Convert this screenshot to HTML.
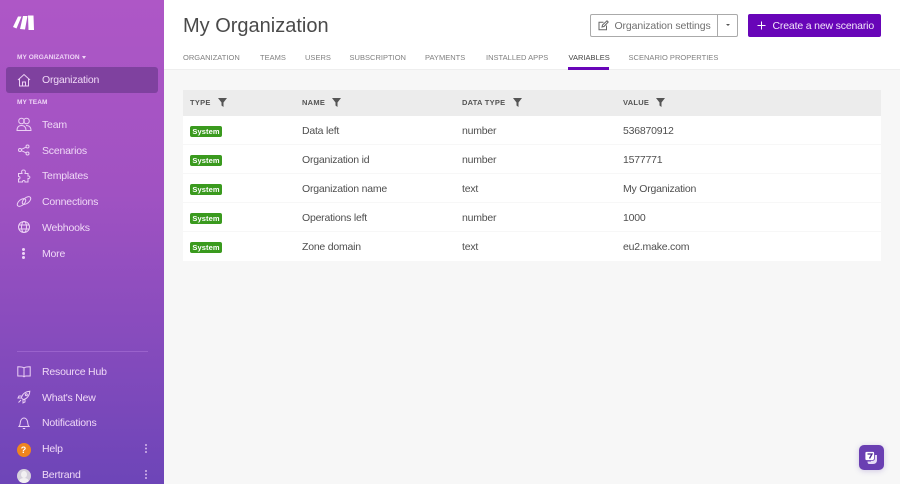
<!DOCTYPE html>
<html><head><meta charset="utf-8"><style>
html,body{margin:0;padding:0}
body{width:900px;height:484px;overflow:hidden;position:relative;background:#f7f7f7;font-family:"Liberation Sans",sans-serif;color:#444}
div,span{position:absolute;white-space:nowrap}
svg{position:absolute;fill:none;stroke:#ecd0f5;stroke-width:1}
#side{left:0;top:0;width:164px;height:484px;background:linear-gradient(180deg,#ae57c6 0%,#a052c2 40%,#6d45b8 100%)}
.n{left:42px;font-size:10.5px;letter-spacing:-.2px;color:#f0d9f7;line-height:14px}
.h{left:17px;font-size:6.5px;font-weight:bold;letter-spacing:.1px;color:#efd5f7;line-height:10px}
.tab{top:52px;font-size:7.5px;letter-spacing:.02px;color:#808080;line-height:11px}
.th{top:97px;font-size:7.5px;font-weight:bold;letter-spacing:.25px;color:#555;line-height:11px}
.f{top:98px;stroke:none;fill:#555}
.r{left:183px;width:698px;background:#fff;height:28px}
.b{left:190px;width:32px;height:11px;border-radius:2px;background:#3a9a1e;color:#fff;font-size:7.5px;font-weight:bold;line-height:11px;text-align:center;letter-spacing:.1px}
.t{font-size:10.5px;letter-spacing:-.22px;color:#4f4f4f;line-height:14px}
</style></head><body>
<div style="left:164px;top:0;width:736px;height:70px;background:#fff;border-bottom:1px solid #eee;box-sizing:border-box"></div>

<div id="side"></div>
<svg style="left:12px;top:14px;stroke:none;fill:#fff" width="24" height="18" viewBox="0 0 24 18"><path d="M1 13 6 2.500 9.500 2.500 4.500 14.500Z M8 15 11 2 15.500 2 13 15.500Z M16 1.500H21.500L22 16H16.500Z"/></svg>
<div class="h" style="top:53px">MY ORGANIZATION</div>
<div style="left:82px;top:56px;width:0;height:0;border-left:2.5px solid transparent;border-right:2.5px solid transparent;border-top:3px solid #efd5f7"></div>
<div style="left:6px;top:67px;width:152px;height:26px;border-radius:3px;background:#7f419f"></div>
<svg style="left:17px;top:73px" width="14" height="14" viewBox="0 0 14 14"><path d="M1 7 7 1.500 13 7M2.500 6V13H11.500V6M5.500 13V9H8.500V13"/></svg>
<div class="n" style="top:73px">Organization</div>
<div class="h" style="top:98px">MY TEAM</div>

<svg style="left:16px;top:117px" width="16" height="15" viewBox="0 0 16 15"><circle cx="5.500" cy="4" r="2.800"/><circle cx="10.500" cy="4" r="2.800"/><path d="M1 13.500C1 9.500 3 8.500 5.500 8.500S10 9.500 10 13.500ZM10 8.500C13 8.500 15 10 15 13.500H10.500"/></svg>
<div class="n" style="top:118px">Team</div>
<svg style="left:18px;top:144px" width="12" height="12" viewBox="0 0 12 12"><circle cx="2" cy="6" r="1.500"/><circle cx="9.500" cy="2.500" r="1.500"/><circle cx="9.500" cy="9.500" r="1.500"/><path d="M3.500 5.300 8 3.200M3.500 6.700 8 8.800"/></svg>
<div class="n" style="top:144px">Scenarios</div>
<svg style="left:17px;top:169px" width="14" height="14" viewBox="0 0 14 14"><path d="M1.500 4.500H5C4 2 5 1 6.500 1S9 2 8 4.500H11V7C13.500 6.500 13.500 10 11 9.500V13H8C8.500 11 5 11 5.500 13H1.500V10C3.500 10.500 3.500 7 1.500 7.500Z"/></svg>
<div class="n" style="top:169px">Templates</div>
<svg style="left:16px;top:195px" width="16" height="13" viewBox="0 0 16 13"><ellipse cx="5.500" cy="7.500" rx="5" ry="2.800" transform="rotate(-40 5.500 7.500)"/><ellipse cx="10.500" cy="5.500" rx="5" ry="2.800" transform="rotate(-40 10.500 5.500)"/></svg>
<div class="n" style="top:195px">Connections</div>
<svg style="left:17px;top:220px" width="14" height="14" viewBox="0 0 14 14"><circle cx="7" cy="7" r="5.500"/><ellipse cx="7" cy="7" rx="2.500" ry="5.500"/><path d="M1.500 5H12.500M1.500 9H12.500"/></svg>
<div class="n" style="top:221px">Webhooks</div>
<div style="left:22px;top:248px;width:3px;height:3px;border-radius:50%;background:#eed6f6"></div>
<div style="left:22px;top:252px;width:3px;height:3px;border-radius:50%;background:#eed6f6"></div>
<div style="left:22px;top:256px;width:3px;height:3px;border-radius:50%;background:#eed6f6"></div>
<div class="n" style="top:247px">More</div>

<div style="left:17px;top:351px;width:131px;height:1px;background:#9a62cc"></div>
<svg style="left:17px;top:365px" width="14" height="13" viewBox="0 0 14 13"><path d="M7 3C6 2 4 1.800 .8 1.800V11H5C6 11 6.500 11.200 7 11.800 7.500 11.200 8 11 9 11H13.200V1.800C10 1.800 8 2 7 3ZM7 3V11.800"/></svg>
<div class="n" style="top:365px">Resource Hub</div>
<svg style="left:17px;top:390px" width="14" height="14" viewBox="0 0 14 14"><path d="M4.500 8C5 4 8.500 1.500 12.800 1.200 12.500 5.500 10 9 6 9.500ZM4.500 6H2L1 8H4M8 9.500V12L6 13V10M4 10 1.500 12.500"/><circle cx="9.300" cy="4.700" r="1"/></svg>
<div class="n" style="top:391px">What's New</div>
<svg style="left:18px;top:416px" width="12" height="14" viewBox="0 0 12 14"><path d="M1 10.500C2.500 9 2 7.500 2.500 5.500 3 3.500 4.500 2 6 2S9 3.500 9.500 5.500C10 7.500 9.500 9 11 10.500ZM4.800 12.500H7.200"/></svg>
<div class="n" style="top:416px">Notifications</div>
<div style="left:16.500px;top:443px;width:14px;height:14px;border-radius:50%;background:#f0851e;color:#fff;font-size:9px;font-weight:bold;line-height:14px;text-align:center">?</div>
<div class="n" style="top:442px">Help</div>
<div style="left:144.500px;top:444px;width:2px;height:2px;background:#d5b7ea;box-shadow:0 3.500px #d5b7ea,0 7px #d5b7ea;border-radius:50%"></div>
<div style="left:16.500px;top:469px;width:14px;height:14px;border-radius:50%;background:#d6d1dc;overflow:hidden"><div style="left:4px;top:2px;width:6px;height:7px;border-radius:50%;background:#f2f0f2"></div><div style="left:2px;top:9px;width:10px;height:7px;border-radius:50%;background:#f2f0f2"></div></div>
<div class="n" style="top:468px">Bertrand</div>
<div style="left:144.500px;top:470px;width:2px;height:2px;background:#d5b7ea;box-shadow:0 3.500px #d5b7ea,0 7px #d5b7ea;border-radius:50%"></div>

<div style="left:183px;top:13px;font-size:20px;color:#4a4a4a;line-height:27px">My Organization</div>

<div style="left:590px;top:14px;width:148px;height:23px;border:1px solid #aaa;border-radius:2px;background:#fff;box-sizing:border-box"></div>
<div style="left:717px;top:14px;width:1px;height:23px;background:#aaa"></div>
<svg style="left:598px;top:20px;stroke:#666" width="11" height="11" viewBox="0 0 11 11"><path d="M8.500 5.500V9.800H1V2.300H5.500M4 7 4.500 5 9 .8 10.200 2 6 6.500Z"/></svg>
<div style="left:614.500px;top:19px;font-size:10.5px;letter-spacing:-.12px;color:#707070;line-height:14px">Organization settings</div>
<div style="left:726px;top:24px;width:0;height:0;border-left:2px solid transparent;border-right:2px solid transparent;border-top:2.500px solid #555"></div>
<div style="left:748px;top:14px;width:133px;height:23px;border-radius:2px;background:#6805b8"></div>
<svg style="left:757px;top:21px;stroke:#fff" width="9" height="9" viewBox="0 0 9 9"><path d="M4.500 .5V8.500M.5 4.500H8.500"/></svg>
<div style="left:772.500px;top:19px;font-size:10.5px;letter-spacing:-.17px;color:#f3e6fb;line-height:14px">Create a new scenario</div>

<div class="tab" style="left:183px">ORGANIZATION</div>
<div class="tab" style="left:260px">TEAMS</div>
<div class="tab" style="left:305px">USERS</div>
<div class="tab" style="left:349.500px">SUBSCRIPTION</div>
<div class="tab" style="left:425px">PAYMENTS</div>
<div class="tab" style="left:486px">INSTALLED APPS</div>
<div class="tab" style="left:568.500px;color:#444">VARIABLES</div>
<div style="left:568px;top:67px;width:41px;height:3px;background:#6805b8"></div>
<div class="tab" style="left:628.500px">SCENARIO PROPERTIES</div>

<div style="left:183px;top:90px;width:698px;height:26px;background:#ececec"></div>
<div class="th" style="left:190px">TYPE</div><svg class="f" style="left:218px" width="9" height="9" viewBox="0 0 9 9"><path d="M0 0H9L5.500 4.500V9L3.500 7.500V4.500Z"/></svg>
<div class="th" style="left:302px">NAME</div><svg class="f" style="left:332px" width="9" height="9" viewBox="0 0 9 9"><path d="M0 0H9L5.500 4.500V9L3.500 7.500V4.500Z"/></svg>
<div class="th" style="left:462px">DATA TYPE</div><svg class="f" style="left:512.500px" width="9" height="9" viewBox="0 0 9 9"><path d="M0 0H9L5.500 4.500V9L3.500 7.500V4.500Z"/></svg>
<div class="th" style="left:623px">VALUE</div><svg class="f" style="left:655.500px" width="9" height="9" viewBox="0 0 9 9"><path d="M0 0H9L5.500 4.500V9L3.500 7.500V4.500Z"/></svg>

<div class="r" style="top:116px"></div>
<div class="r" style="top:145px"></div>
<div class="r" style="top:174px"></div>
<div class="r" style="top:203px"></div>
<div class="r" style="top:232px;height:29px"></div>

<div class="b" style="top:126px">System</div><div class="t" style="left:302px;top:124px">Data left</div><div class="t" style="left:462px;top:124px">number</div><div class="t" style="left:623px;top:124px">536870912</div>
<div class="b" style="top:155px">System</div><div class="t" style="left:302px;top:153px">Organization id</div><div class="t" style="left:462px;top:153px">number</div><div class="t" style="left:623px;top:153px">1577771</div>
<div class="b" style="top:184px">System</div><div class="t" style="left:302px;top:182px">Organization name</div><div class="t" style="left:462px;top:182px">text</div><div class="t" style="left:623px;top:182px">My Organization</div>
<div class="b" style="top:213px">System</div><div class="t" style="left:302px;top:211px">Operations left</div><div class="t" style="left:462px;top:211px">number</div><div class="t" style="left:623px;top:211px">1000</div>
<div class="b" style="top:242px">System</div><div class="t" style="left:302px;top:240px">Zone domain</div><div class="t" style="left:462px;top:240px">text</div><div class="t" style="left:623px;top:240px">eu2.make.com</div>

<div style="left:859px;top:445px;width:25px;height:25px;border-radius:5px;background:#6a3fb2;box-shadow:0 1px 6px rgba(90,60,170,.25)"></div>
<svg style="left:864px;top:450px;stroke:none" width="15" height="15" viewBox="0 0 15 15"><path fill="#e6dcf5" d="M7 5H13V10C13 12.500 11.500 14 9 14H5.500C4 14 3.500 13 3.500 11.500H7Z"/><path fill="#fff" stroke="#6a3fb2" stroke-width=".8" d="M2.500 1.500H9C10 1.500 10.500 2 10.500 3V8C10.500 9.500 9.500 10.500 8 10.500H2.500C1.500 10.500 1 10 1 9V3C1 2 1.500 1.500 2.500 1.500Z"/><path stroke="#4a2a90" stroke-width="1.300" d="M3.500 4H8L5.500 8.500"/></svg>
</body></html>
